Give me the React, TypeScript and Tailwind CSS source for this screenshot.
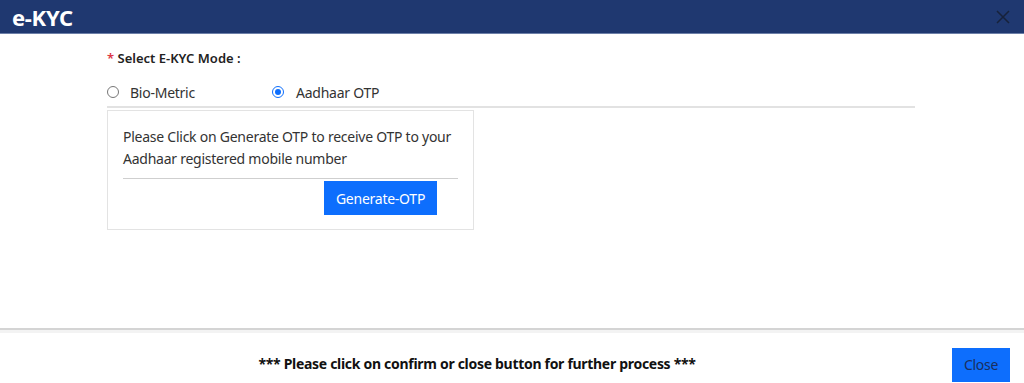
import React from "react";

export default function App() {
  const font = { fontFamily: '"Noto Sans", "Open Sans", sans-serif' };
  return (
    <div className="w-[1024px] h-[383px] bg-white flex flex-col overflow-hidden" style={font}>
      <div className="h-[34px] bg-[#1f3870] flex items-center justify-between pl-[12px] pr-[14px] border-b border-[#6c7fa8]">
        <div className="text-white font-bold text-[22px] leading-none tracking-[-0.3px]">e-KYC</div>
        <svg width="14" height="14" viewBox="0 0 14 14" className="mt-[1px]">
          <path d="M1 1L13 13M13 1L1 13" stroke="#17223a" strokeWidth="1.5" />
        </svg>
      </div>
      <div className="flex-1 pl-[107px] pr-[109px] pt-[15px] tracking-[-0.25px]">
        <div className="text-[13px] font-semibold text-[#222] leading-[18px] tracking-[0px]">
          <span className="text-[#dc3545]">*</span> Select E-KYC Mode :
        </div>
        <div className="flex items-center mt-[15px] h-[20px] text-[14px] text-[#333]">
          <span className="w-[12px] h-[12px] rounded-full border border-[#777] bg-white"></span>
          <span className="ml-[11px] w-[142px]">Bio-Metric</span>
          <span className="w-[12px] h-[12px] rounded-full border border-[#0d6efd] flex items-center justify-center">
            <span className="w-[6px] h-[6px] rounded-full bg-[#0d6efd]"></span>
          </span>
          <span className="ml-[12px]">Aadhaar OTP</span>
        </div>
        <div className="h-[2px] bg-[#e2e2e2] mt-[4px]"></div>
        <div className="w-[367px] mt-[2px] border border-[#e3e3e3] pt-[15px] px-[15px] pb-[14px]">
          <div className="text-[14px] leading-[22px] text-[#333]">
            Please Click on Generate OTP to receive OTP to your Aadhaar registered mobile number
          </div>
          <div className="h-[1px] bg-[#cfcfcf] mt-[8px]"></div>
          <div className="flex justify-end pr-[21px]">
            <button className="mt-[2px] w-[113px] h-[34px] bg-[#0d6efd] text-white text-[14px]">Generate-OTP</button>
          </div>
        </div>
      </div>
      <div className="border-t-[2px] border-[#d4d4d4] h-[55px] flex items-center relative">
        <div className="absolute left-0 right-0 top-0 h-[3px] bg-[#f3f3f3]"></div>
        <div className="w-[954px] text-center font-bold text-[14px] text-[#111] mt-[14px] tracking-[-0.3px]">
          *** Please click on confirm or close button for further process ***
        </div>
        <button className="ml-[-2px] mt-[16px] w-[58px] h-[34px] bg-[#0d6efd] text-[#1a2f5e] text-[14px] tracking-[-0.3px]">Close</button>
      </div>
    </div>
  );
}
